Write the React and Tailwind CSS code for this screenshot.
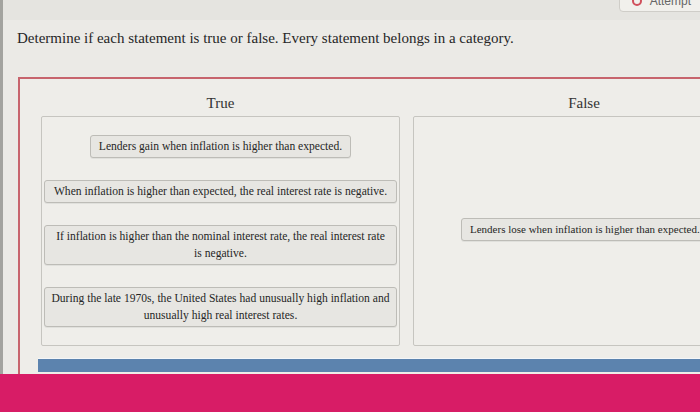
import React from 'react'

const serif = { fontFamily: '"Liberation Serif", "Times New Roman", serif' }

function Card({ children, wide, className = '' }) {
    return (
        <div
            className={
                'rounded-[3px] border border-[#bdbcb7] bg-[#e7e6e2] py-[2px] text-center leading-[17px] text-[#262626] shadow-[0_1px_0_rgba(0,0,0,0.06)] ' +
                (wide ? 'mx-auto w-[353px] px-1 ' : 'w-fit px-2 ') +
                className
            }
        >
            {children}
        </div>
    )
}

function Bucket({ label, children, className }) {
    return (
        <div className={'flex shrink-0 flex-col ' + className}>
            <div className="h-[37px] pt-[15px] text-center text-[15px] leading-[18px] text-[#333]">{label}</div>
            <div className="h-[230px] rounded-[2px] border border-[#c6c5c0] bg-[#efeeea]">{children}</div>
        </div>
    )
}

export default function App() {
    return (
        <div className="relative flex h-[412px] w-[700px] flex-col overflow-hidden bg-[#ebeae6]" style={serif}>
            <div className="flex flex-1 flex-col border-l-[3px] border-[#a3a39f]">
                {/* top strip with the attempt button peeking in */}
                <div className="flex h-[20px] justify-end bg-[#e5e4e0]">
                    <div className="-mt-[10px] mr-[-4px] flex h-[22px] items-center gap-2 rounded-[4px] border border-[#cfcdc8] bg-[#f1f0ec] px-3 text-[12px] text-[#666]" style={{ fontFamily: '"Liberation Sans", Arial, sans-serif' }}>
                        <span className="h-[10px] w-[10px] rounded-full border-2 border-[#d0505c]" />
                        <span>Attempt</span>
                    </div>
                </div>

                <p className="pl-[14px] pt-[9px] text-[15px] leading-[18px] text-[#262626]">
                    Determine if each statement is true or false. Every statement belongs in a category.
                </p>

                <div className="ml-[15px] mt-[30px] flex flex-1 flex-col border-l-2 border-t-2 border-[#c7646d] bg-[#eeede9]">
                    <div className="flex gap-[13px] pl-[21px]">
                        <Bucket label="True" className="w-[359px]">
                            <div className="flex flex-col gap-[22px] px-[2px] pt-[18px] text-[11.6px]">
                                <Card className="mx-auto">Lenders gain when inflation is higher than expected.</Card>
                                <Card wide>When inflation is higher than expected, the real interest rate is negative.</Card>
                                <Card wide>
                                    If inflation is higher than the nominal interest rate, the real interest rate
                                    <br />
                                    is negative.
                                </Card>
                                <Card wide>
                                    During the late 1970s, the United States had unusually high inflation and
                                    <br />
                                    unusually high real interest rates.
                                </Card>
                            </div>
                        </Bucket>
                        <Bucket label="False" className="w-[342px]">
                            <div className="pl-[47px] pt-[101px] text-[11px]">
                                <Card className="whitespace-nowrap">Lenders lose when inflation is higher than expected.</Card>
                            </div>
                        </Bucket>
                    </div>
                    <div className="ml-[18px] mt-[12px] h-[14px] border-t border-[#f4f6f8] bg-[#5c83ae]" />
                </div>
            </div>
            <div className="h-[38px] bg-[#d81c66]" />
        </div>
    )
}
